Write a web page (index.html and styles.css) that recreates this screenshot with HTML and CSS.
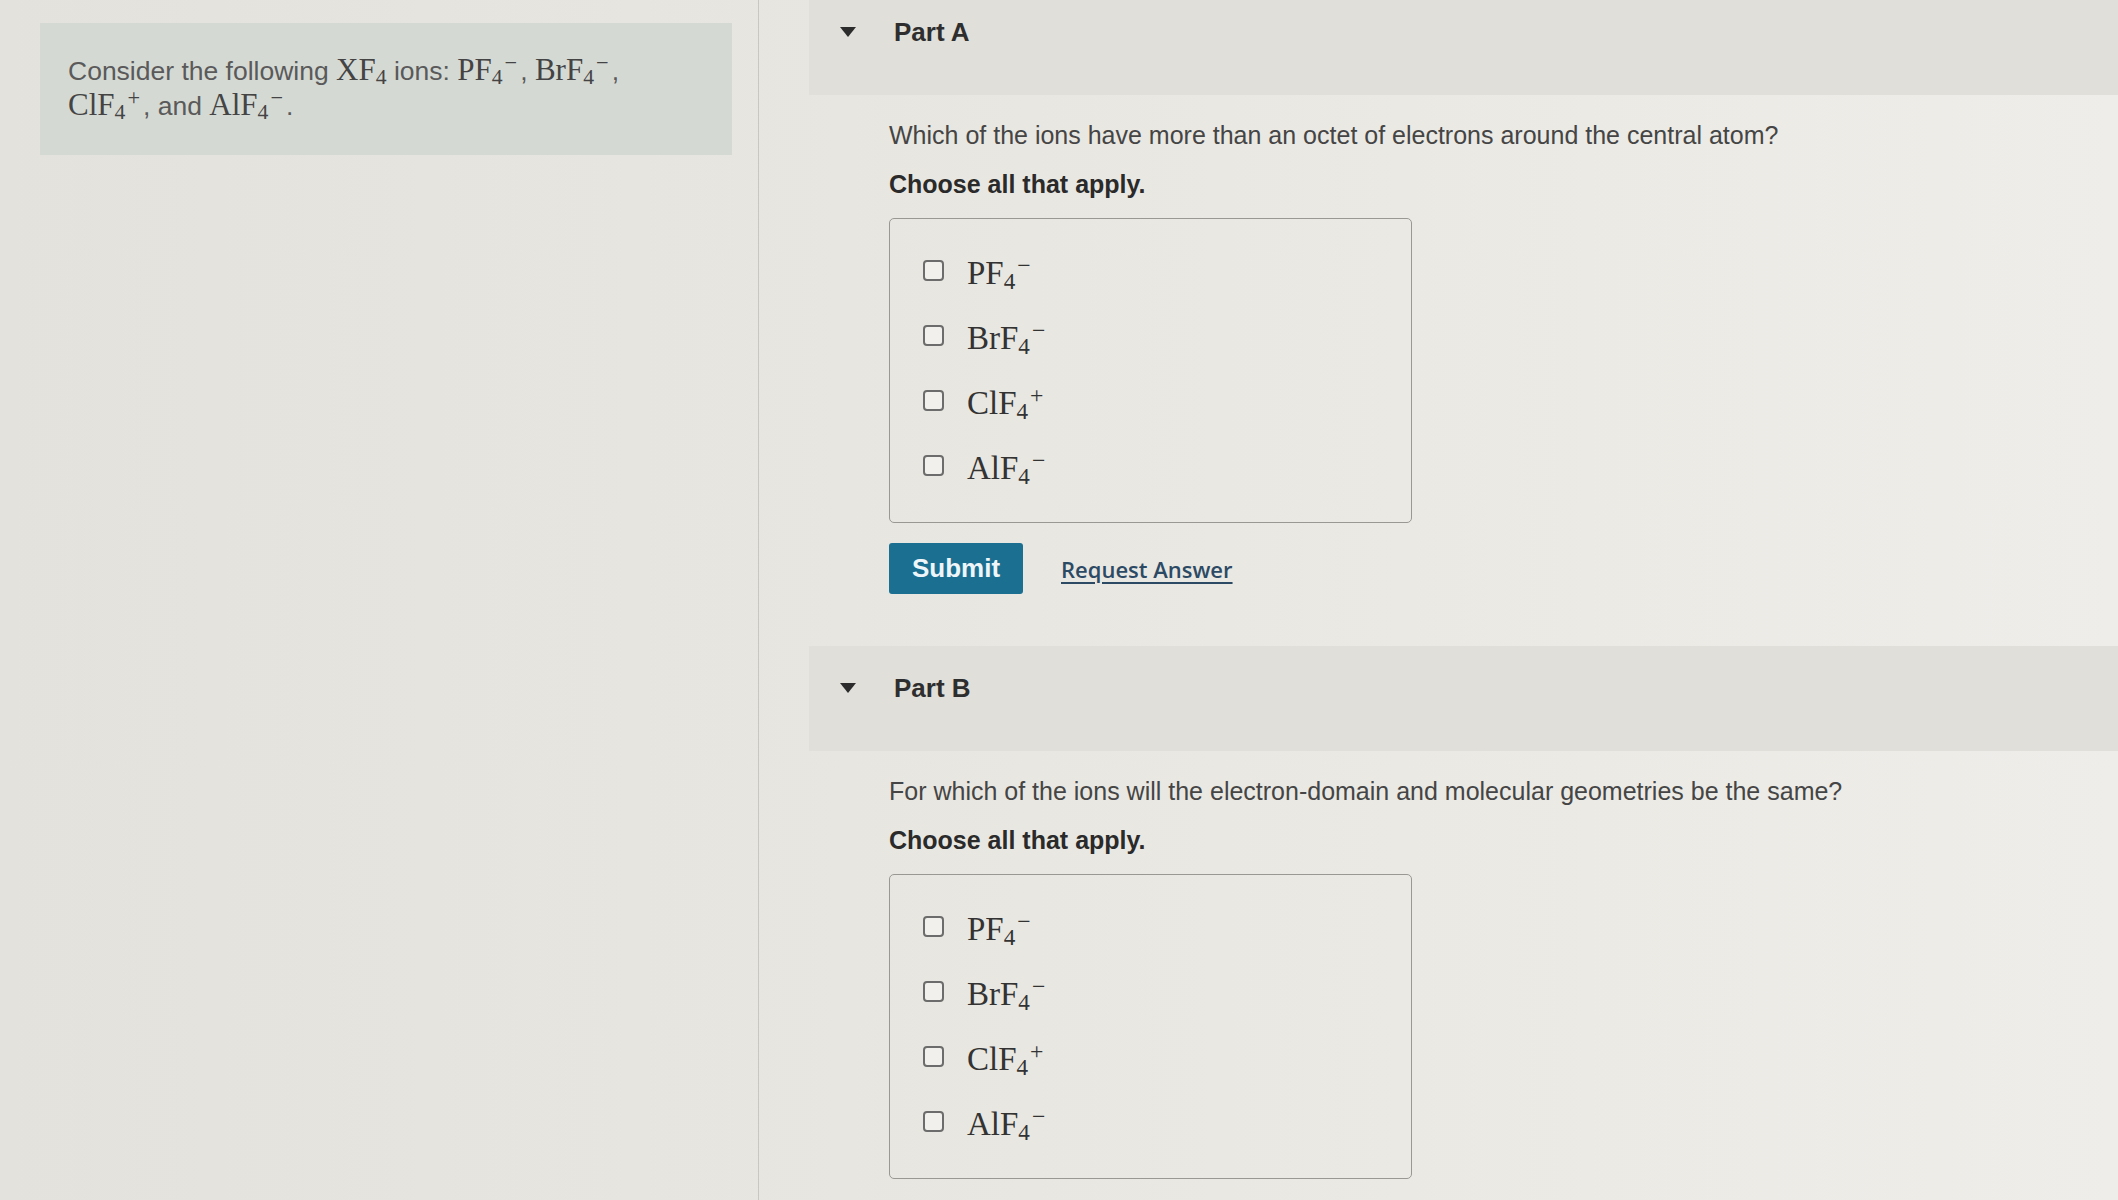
FILE: index.html
```html
<!DOCTYPE html>
<html lang="en">
<head>
<meta charset="utf-8">
<title>XF4 ions</title>
<link rel="stylesheet" href="styles.css">
</head>
<body>
<div class="page">
  <aside class="left">
    <div class="context">
      Consider the following <span class="m">XF<sub>4</sub></span> ions: <span class="m">PF<sub>4</sub><sup>−</sup></span>, <span class="m">BrF<sub>4</sub><sup>−</sup></span>,<br>
      <span class="m">ClF<sub>4</sub><sup>+</sup></span>, and <span class="m">AlF<sub>4</sub><sup>−</sup></span>.
    </div>
  </aside>
  <main class="right">
    <section class="part first">
      <div class="part-head"><span class="tri"></span><span class="part-title">Part A</span></div>
      <div class="part-body">
        <p class="question">Which of the ions have more than an octet of electrons around the central atom?</p>
        <p class="choose">Choose all that apply.</p>
        <div class="options">
          <label class="opt"><span class="cb"></span><span class="f">PF<sub>4</sub><sup>−</sup></span></label>
          <label class="opt"><span class="cb"></span><span class="f">BrF<sub>4</sub><sup>−</sup></span></label>
          <label class="opt"><span class="cb"></span><span class="f">ClF<sub>4</sub><sup>+</sup></span></label>
          <label class="opt"><span class="cb"></span><span class="f">AlF<sub>4</sub><sup>−</sup></span></label>
        </div>
        <div class="actions">
          <button class="submit">Submit</button>
          <a class="request" href="#">Request Answer</a>
        </div>
      </div>
    </section>
    <section class="part">
      <div class="part-head"><span class="tri"></span><span class="part-title">Part B</span></div>
      <div class="part-body">
        <p class="question">For which of the ions will the electron-domain and molecular geometries be the same?</p>
        <p class="choose">Choose all that apply.</p>
        <div class="options">
          <label class="opt"><span class="cb"></span><span class="f">PF<sub>4</sub><sup>−</sup></span></label>
          <label class="opt"><span class="cb"></span><span class="f">BrF<sub>4</sub><sup>−</sup></span></label>
          <label class="opt"><span class="cb"></span><span class="f">ClF<sub>4</sub><sup>+</sup></span></label>
          <label class="opt"><span class="cb"></span><span class="f">AlF<sub>4</sub><sup>−</sup></span></label>
        </div>
      </div>
    </section>
  </main>
</div>
</body>
</html>
```
FILE: styles.css
```css
html, body {
  margin: 0;
  padding: 0;
}
body {
  width: 2118px;
  height: 1200px;
  overflow: hidden;
  font-family: "Liberation Sans", Arial, sans-serif;
  color: #444;
  background: linear-gradient(90deg, #e4e2dc 0%, #e8e6e0 40%, #ebeae5 75%, #eeede9 100%);
}
.page {
  display: flex;
  height: 1200px;
}
.left {
  width: 759px;
  flex: none;
  box-sizing: border-box;
  border-right: 1.5px solid #c9c7c1;
  padding: 23px 0 0 40px;
}
.context {
  width: 692px;
  height: 132px;
  box-sizing: border-box;
  padding: 31px 20px 31px 28px;
  background: #d5d9d4;
  font-size: 26.5px;
  line-height: 35px;
  color: #5a5a5a;
  white-space: nowrap;
}
.m {
  font-family: "Liberation Serif", "DejaVu Serif", serif;
  font-size: 31px;
  line-height: 0;
  color: #444;
}
.m sub, .f sub {
  font-size: 0.7em;
  vertical-align: -0.2em;
  line-height: 0;
}
.m sup, .f sup {
  font-size: 0.72em;
  vertical-align: 0.45em;
  line-height: 0;
  margin-left: 2px;
}
.m sup {
  margin-right: 3px;
}
.right {
  flex: 1;
  min-width: 0;
}
.part {
  display: flex;
  flex-direction: column;
}
.part.first {
  margin-top: -10px;
}
.part-head {
  margin-left: 50px;
  height: 105px;
  box-sizing: border-box;
  padding: 27px 0 0 31px;
  background: #e0dfda;
  display: flex;
  align-items: flex-start;
}
.tri {
  width: 0;
  height: 0;
  margin-top: 10px;
  border-left: 8px solid transparent;
  border-right: 8px solid transparent;
  border-top: 10px solid #2c2c2c;
}
.part-title {
  margin-left: 38px;
  font-size: 26px;
  line-height: 30px;
  font-weight: 700;
  color: #2e2e2e;
}
.part-body {
  padding: 25px 0 0 130px;
}
.question {
  margin: 0;
  font-size: 25px;
  line-height: 30px;
  color: #454545;
}
.choose {
  margin: 19px 0 0;
  font-size: 25px;
  line-height: 30px;
  font-weight: 700;
  color: #2a2a2a;
}
.options {
  margin-top: 19px;
  width: 523px;
  box-sizing: border-box;
  height: 305px;
  border: 1.5px solid #9a9893;
  border-radius: 5px;
  padding: 22px 0 0 33px;
  display: flex;
  flex-direction: column;
}
.opt {
  height: 65px;
  display: flex;
  align-items: center;
}
.cb {
  width: 21px;
  height: 21px;
  box-sizing: border-box;
  border: 2px solid #6c6c6c;
  border-radius: 4px;
  background: #f1f0ec;
  flex: none;
  margin-top: -6px;
}
.f {
  margin-left: 23px;
  font-family: "Liberation Serif", "DejaVu Serif", serif;
  font-size: 33px;
  color: #333;
}
.actions {
  margin-top: 20px;
  margin-bottom: 52px;
  display: flex;
  align-items: center;
  gap: 38px;
}
.submit {
  width: 134px;
  height: 51px;
  border: none;
  border-radius: 3px;
  background: #1b6f91;
  color: #eef6fa;
  font-family: "Liberation Sans", Arial, sans-serif;
  font-weight: 700;
  font-size: 26px;
  padding: 0;
}
.request {
  font-family: "Open Sans", "Liberation Sans", sans-serif;
  font-weight: 600;
  font-size: 22px;
  color: #2d4a65;
  text-decoration: underline;
  text-underline-offset: 4px;
}
```
